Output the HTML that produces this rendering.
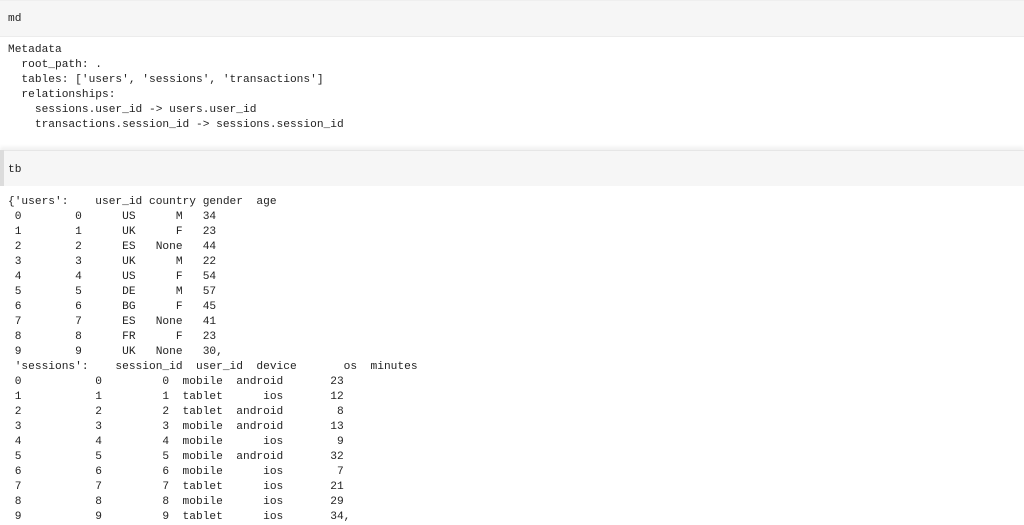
<!DOCTYPE html>
<html><head><meta charset="utf-8"><style>
html,body{margin:0;padding:0;background:#fff;width:1024px;height:525px;overflow:hidden}
.cell{position:absolute;left:0;width:1024px;background:#f6f6f6}
pre{position:absolute;margin:0;font-family:"Liberation Mono",monospace;font-size:11.2px;line-height:15px;color:#222;white-space:pre}
</style></head><body>
<div class="cell" style="top:0;height:35px;border-top:1px solid #efefef;border-bottom:1px solid #ececec"></div>
<pre style="left:8px;top:12px">md</pre>
<pre style="left:8px;top:43px">Metadata
  root_path: .
  tables: ['users', 'sessions', 'transactions']
  relationships:
    sessions.user_id -> users.user_id
    transactions.session_id -> sessions.session_id</pre>
<div class="cell" style="top:150px;height:35px;border-top:1px solid #e6e6e6;box-shadow:0 -3px 4px #f0f0f0"></div>
<div style="position:absolute;left:0;top:150px;width:4px;height:36px;background:#dcdcdc"></div>
<pre style="left:8px;top:163px">tb</pre>
<pre style="left:8px;top:195px">{'users':    user_id country gender  age
 0        0      US      M   34
 1        1      UK      F   23
 2        2      ES   None   44
 3        3      UK      M   22
 4        4      US      F   54
 5        5      DE      M   57
 6        6      BG      F   45
 7        7      ES   None   41
 8        8      FR      F   23
 9        9      UK   None   30,
 'sessions':    session_id  user_id  device       os  minutes
 0           0         0  mobile  android       23
 1           1         1  tablet      ios       12
 2           2         2  tablet  android        8
 3           3         3  mobile  android       13
 4           4         4  mobile      ios        9
 5           5         5  mobile  android       32
 6           6         6  mobile      ios        7
 7           7         7  tablet      ios       21
 8           8         8  mobile      ios       29
 9           9         9  tablet      ios       34,</pre>
</body></html>
